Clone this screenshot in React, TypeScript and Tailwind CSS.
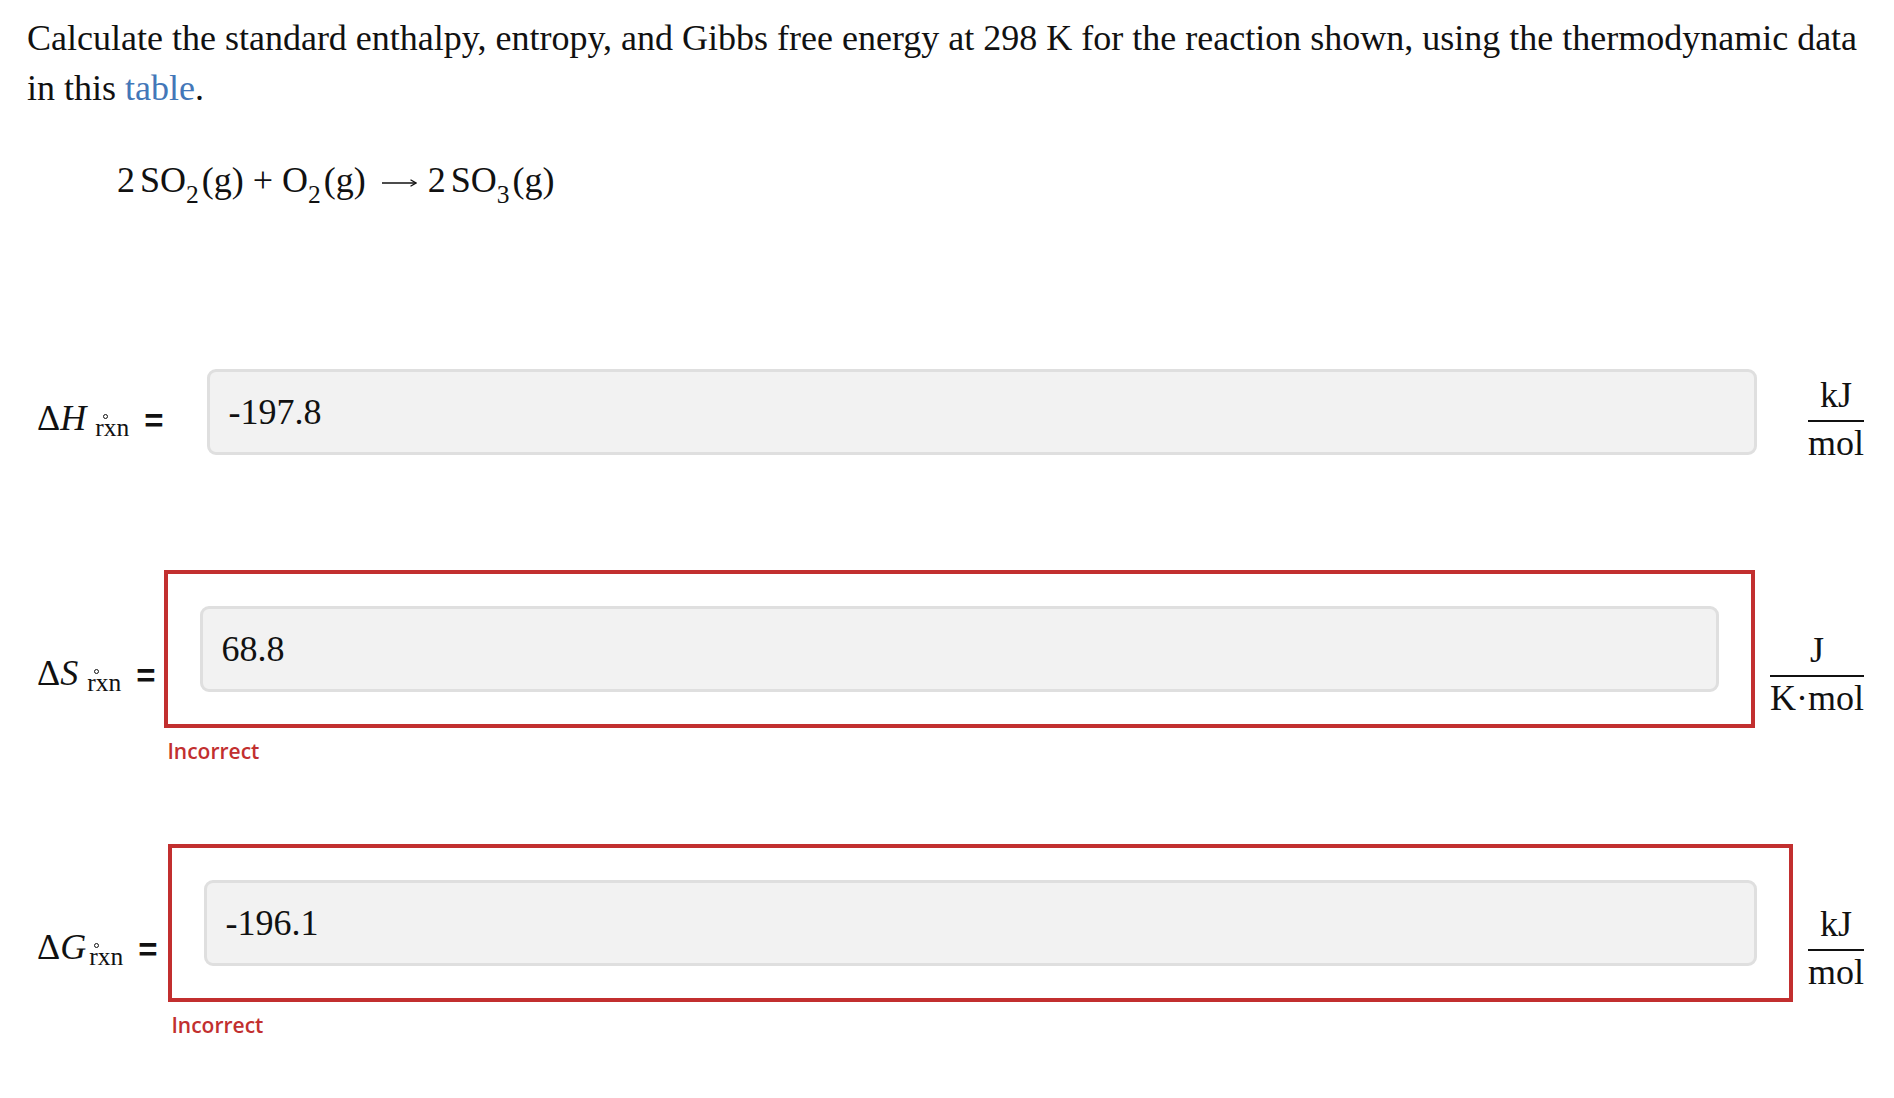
import React from 'react';

type Row = {
  letter: string;
  subGap: string;
  dotLeft: string;
  labelGap: string;
  value: string;
  num: string;
  den: string;
  incorrect: boolean;
};

const rows: Row[] = [
  { letter: 'H', subGap: 'ml-[9px]', dotLeft: 'left-[8px]', labelGap: 'mr-[8px]', value: '-197.8', num: 'kJ', den: 'mol', incorrect: false },
  { letter: 'S', subGap: 'ml-[9px]', dotLeft: 'left-[7px]', labelGap: 'mr-[9px]', value: '68.8', num: 'J', den: 'K·mol', incorrect: true },
  { letter: 'G', subGap: 'ml-[3px]', dotLeft: 'left-[5px]', labelGap: 'mr-[11px]', value: '-196.1', num: 'kJ', den: 'mol', incorrect: true },
];

function Sub({ children }: { children: React.ReactNode }) {
  return <span className="text-[25.5px] leading-none align-[-11px]">{children}</span>;
}

function Arrow() {
  return (
    <svg width="36" height="12" viewBox="0 0 36 12" className="inline-block align-[3px] ml-[15px] mr-[11px]">
      <line x1="1" y1="6" x2="34.5" y2="6" stroke="#111" strokeWidth="1.5" />
      <polyline points="29.5,2.8 35,6 29.5,9.2" fill="none" stroke="#111" strokeWidth="1.3" />
    </svg>
  );
}

function Label({ row }: { row: Row }) {
  return (
    <div className={`pt-[15px] leading-[50px] whitespace-nowrap ${row.labelGap}`}>
      <span>Δ</span>
      <span className="italic">{row.letter}</span>
      <span className={`relative inline-block text-[25.5px] leading-none align-[-6px] ${row.subGap}`}>
        rxn
        <span className={`absolute top-[-1px] ${row.dotLeft} w-[5px] h-[5px] rounded-full border border-[#111]`} />
      </span>
      <span className="ml-[15px] font-['Liberation_Sans',sans-serif] font-bold text-[33px] align-[-2px]">=</span>
    </div>
  );
}

function Unit({ num, den }: { num: string; den: string }) {
  return (
    <div className="flex flex-col items-center pt-[14px] px-[2px] whitespace-nowrap">
      <div className="h-[36px] leading-[36px]">{num}</div>
      <div className="mt-[7px] h-[2px] w-full bg-[#111]" />
      <div className="mt-[3px] h-[36px] leading-[36px]">{den}</div>
    </div>
  );
}

export default function App() {
  return (
    <div className="min-h-screen bg-white text-[#111] font-['Liberation_Serif',serif] text-[36px] pt-[13px] pl-[27px] pr-[28px]">
      <p className="leading-[50px]">
        Calculate the standard enthalpy, entropy, and Gibbs free energy at 298 K for the reaction shown, using the thermodynamic data
        <br />
        in this <span className="text-[#4377b8]">table</span>.
      </p>

      <div className="mt-[42px] pl-[90px] leading-[50px] whitespace-nowrap">
        <span className="mr-[5px]">2</span>SO<Sub>2</Sub>
        <span className="ml-[3px]">(g)</span>
        <span className="mx-[9px]">+</span>
        O<Sub>2</Sub>
        <span className="ml-[3px]">(g)</span>
        <Arrow />
        <span className="mr-[5px]">2</span>SO<Sub>3</Sub>
        <span className="ml-[3px]">(g)</span>
      </div>

      <div className="mt-[125px] pl-[10px] flex flex-col gap-[79px]">
        {rows.map((row) => (
          <div key={row.letter} className="flex items-center">
            <Label row={row} />
            <div className="flex-1 min-w-0 mr-[13px]">
              <div
                className={
                  row.incorrect
                    ? 'border-[4px] border-[#c22f2f] p-[32px]'
                    : 'border-[4px] border-transparent p-[32px]'
                }
              >
                <input
                  readOnly
                  value={row.value}
                  className="block w-full h-[86px] rounded-[9px] border-[3px] border-[#dfdfdf] bg-[#f2f2f2] px-[18px] text-[36px] text-[#111] outline-none"
                />
              </div>
              {row.incorrect && (
                <div className="mt-[9px] pl-[3px] leading-[28px] text-[21px] font-semibold text-[#c22f2f] font-['Open_Sans',sans-serif]">
                  Incorrect
                </div>
              )}
            </div>
            <Unit num={row.num} den={row.den} />
          </div>
        ))}
      </div>
    </div>
  );
}
